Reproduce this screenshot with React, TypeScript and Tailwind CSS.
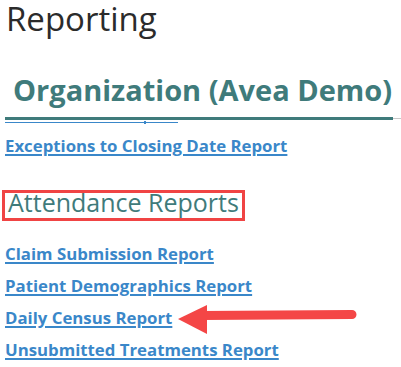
import React from "react";

// ── Data ───────────────────────────────────────────────────────────────────────

const attendanceReports = [
    "Claim Submission Report",
    "Patient Demographics Report",
    "Daily Census Report",
    "Unsubmitted Treatments Report",
];

// ── Report link ────────────────────────────────────────────────────────────────

function ReportLink({ label, className = "" }: { label: string; className?: string }) {
    return (
        <a
            href="#"
            className={`block w-fit text-[16.8px] font-bold text-[#3a87c9] underline underline-offset-[2px] decoration-[1.5px] ${className}`}
        >
            {label}
        </a>
    );
}

// ── Callout arrow ──────────────────────────────────────────────────────────────

function CalloutArrow() {
    return (
        <svg
            className="absolute left-[176px] top-[302px]"
            width="184"
            height="36"
            viewBox="0 0 184 36"
        >
            <path d="M26 13.5 L176 12.5" stroke="#f44646" strokeWidth="9" strokeLinecap="round" fill="none" />
            <path d="M2 17 L31 3 L31 32 Z" fill="#f44646" />
        </svg>
    );
}

// ── Main export ────────────────────────────────────────────────────────────────

export default function App() {
    return (
        <div className="relative w-[401px] h-[367px] overflow-hidden bg-white font-['Open_Sans',sans-serif]">
            <h1 className="pl-[6px] text-[33px] leading-[38px] font-normal text-[#2b2b2b]">Reporting</h1>

            {/* ── Organization heading ── */}
            <div className="mt-[34px] flex items-end">
                <div className="ml-[5px] w-[388px] border-b-[3px] border-[#3f7b7b] pb-[9px]">
                    <h2 className="pl-[8px] text-[29px] leading-[36px] font-bold text-[#3f7b7b]">Organization (Avea Demo)</h2>
                </div>
                <div className="flex-1 mb-[1px] border-b border-[#c8c8c8]" />
            </div>

            <div className="relative ml-[5px] mt-[2px] h-[1px] w-[173px] bg-[#3a87c9]">
                <span className="absolute left-[139px] top-[-1px] h-[3px] w-[2px] bg-[#3a87c9]" />
            </div>

            <ReportLink label="Exceptions to Closing Date Report" className="ml-[5px] mt-[11px] leading-[24px]" />

            {/* ── Attendance heading ── */}
            <div className="ml-[2px] mt-[32px] w-[243px] h-[31px] border-[3px] border-[#f04444]">
                <h2 className="pl-[3px] text-[25px] leading-[19px] text-[#3f7b7b] whitespace-nowrap">Attendance Reports</h2>
            </div>

            <div className="mt-[17px] ml-[5px]">
                {attendanceReports.map((r) => (
                    <ReportLink key={r} label={r} className="leading-[32px]" />
                ))}
            </div>

            <CalloutArrow />
        </div>
    );
}
